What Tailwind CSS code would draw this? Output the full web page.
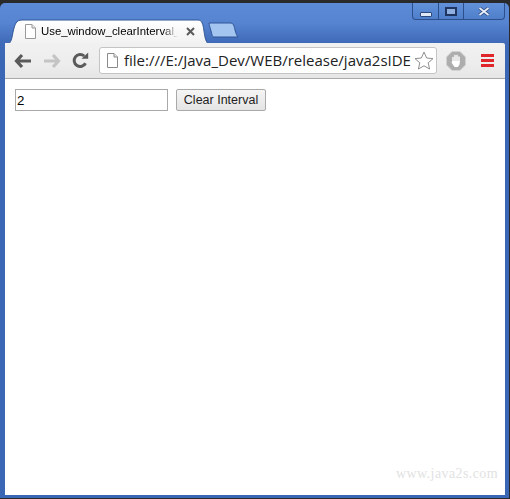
<!DOCTYPE html>
<html lang="en">
<head>
    <meta charset="UTF-8">
    <title>Use_window_clearInterval</title>
    <script src="https://cdn.jsdelivr.net/npm/@tailwindcss/browser@4"></script>
</head>
<body class="bg-white overflow-hidden">
    <!-- window frame -->
    <div class="w-[510px] h-[499px] bg-[#2a2a2a] pt-[3px] pr-[1px] pb-[1px] font-['Liberation_Sans',sans-serif]">
        <div class="relative h-full flex flex-col rounded-t-[5px] bg-[linear-gradient(#5b8ad6_0px,#5784d0_20px,#3e6ab8_40px,#3a67b5_60px,#3a67b5_100%)] pb-[3px] pl-[5px] pr-[4px]">

            <!-- window buttons -->
            <div class="absolute top-0 right-[4px] h-[17px] w-[93px] flex rounded-b-[4px] border border-t-0 border-[#2c4f8c] bg-[linear-gradient(#6291da,#4f7fca)]">
                <div class="w-[26px] flex items-center justify-center border-r border-[#2c4f8c]">
                    <div class="w-[12px] h-[5px] mt-[7px] bg-[#dfe8f5] border border-[#2c4a80] rounded-[1px]"></div>
                </div>
                <div class="w-[25px] flex items-center justify-center border-r border-[#2c4f8c]">
                    <div class="w-[12px] h-[9px] border-[2px] border-[#1f3560] bg-[#8fb0e0]"></div>
                </div>
                <div class="flex-1 flex items-center justify-center">
                    <svg width="12" height="9" viewBox="0 0 12 9"><path d="M1.5 1 L10.5 8 M10.5 1 L1.5 8" stroke="#2c4a80" stroke-width="3.4"/><path d="M1.5 1 L10.5 8 M10.5 1 L1.5 8" stroke="#e8eef8" stroke-width="1.8"/></svg>
                </div>
            </div>

            <!-- tab strip -->
            <div class="relative h-[40px] shrink-0">
                <svg class="absolute left-[2px] top-[16px]" width="204" height="25" viewBox="0 0 204 25">
                    <defs><linearGradient id="tabbg" x1="0" y1="0" x2="0" y2="1"><stop offset="0" stop-color="#ffffff"/><stop offset="1" stop-color="#f1f1f1"/></linearGradient></defs>
                    <path d="M1 25 C4 24 5 19 6 13 C8 5 9 1 15 1 L191 1 C195 1 196 5 197 12 C198 19 199 24 202 25 Z" fill="url(#tabbg)" stroke="#2f5597" stroke-width="1"/>
                </svg>
                <svg class="absolute left-[203px] top-[19px]" width="32" height="16" viewBox="0 0 32 16">
                    <path d="M1 1 L22 1 C26 1 26 4 27 8 C28 12 29 14 30 15 L6 15 C4 15 4 12 3 9 C2 5 1 3 1 1 Z" fill="#a4c5f0" stroke="#2f5597"/>
                </svg>
                <div class="absolute left-[19px] top-[21px] flex items-center h-[15px]">
                    <svg width="13" height="15" viewBox="0 0 13 15"><path d="M1.5 .5 H8 L11.5 4 V14.5 H1.5 Z" fill="#fff" stroke="#9a9a9a"/><path d="M8 .5 V4 H11.5" fill="#e8e8e8" stroke="#9a9a9a"/></svg>
                    <span class="ml-[4px] w-[141px] overflow-hidden whitespace-nowrap text-[11.4px] leading-[15px] text-black [mask-image:linear-gradient(90deg,#000_122px,transparent_137px)]">Use_window_clearInterval_</span>
                    <svg class="ml-[4px]" width="9" height="9" viewBox="0 0 9 9"><path d="M1 1 L8 8 M8 1 L1 8" stroke="#5a5a5a" stroke-width="2"/></svg>
                </div>
            </div>

            <!-- toolbar -->
            <div class="relative h-[36px] shrink-0 flex items-center bg-[linear-gradient(#f1f1f1,#ededed_60%,#e6e6e6)] border-b border-[#a9a9a9] pl-[9px] rounded-tr-[2px]">
                <svg width="18" height="16" viewBox="0 0 18 16"><path d="M8 2 L2.5 8 L8 14 M3 8 H17" fill="none" stroke="#5a5a5a" stroke-width="3.2"/></svg>
                <svg class="ml-[11px]" width="18" height="16" viewBox="0 0 18 16"><path d="M10 2 L15.5 8 L10 14 M15 8 H1" fill="none" stroke="#c4c4c4" stroke-width="3.2"/></svg>
                <svg class="ml-[11px]" width="17" height="17" viewBox="0 0 17 17"><path d="M13.5 11.2 A6 6 0 1 1 12.2 4" fill="none" stroke="#5a5a5a" stroke-width="3"/><path d="M9.5 6.8 L16.2 6.8 L16.2 0.5 Z" fill="#5a5a5a"/></svg>
                <!-- address bar -->
                <div class="ml-[10px] w-[338px] h-[27px] flex items-center bg-white border border-[#c4c4c4] rounded-[3px] pl-[6px]">
                    <svg class="shrink-0" width="13" height="15" viewBox="0 0 13 15"><path d="M1.5 .5 H8 L11.5 4 V14.5 H1.5 Z" fill="#fff" stroke="#8a8a8a"/><path d="M8 .5 V4 H11.5" fill="#e8e8e8" stroke="#8a8a8a"/></svg>
                    <span class="ml-[5px] w-[288px] overflow-hidden whitespace-nowrap text-[15px] text-[#222] font-['Open_Sans',sans-serif]">file:///E:/Java_Dev/WEB/release/java2sIDE</span>
                    <svg class="shrink-0 ml-[2px]" width="20" height="19" viewBox="0 0 20 19"><path d="M10 1 L12.6 7 L19 7.6 L14.2 11.8 L15.6 18 L10 14.8 L4.4 18 L5.8 11.8 L1 7.6 L7.4 7 Z" fill="#fff" stroke="#8f8f8f"/></svg>
                </div>
                <svg class="ml-[9px]" width="20" height="20" viewBox="0 0 20 20">
                    <path d="M6 .5 H14 L19.5 6 V14 L14 19.5 H6 L.5 14 V6 Z" fill="#adadad" stroke="#d2d2d2"/>
                    <path d="M7 10.5 V6.5 M9 10 V4.5 M11 10 V4.5 M13 10.5 V6" stroke="#fff" stroke-width="1.4" stroke-linecap="round"/>
                    <path d="M6.3 10 H13.7 V13 L12 16 H8.5 L5.5 11.5 Z" fill="#fff"/>
                </svg>
                <div class="ml-[15px] w-[13px] flex flex-col gap-[2px]">
                    <div class="h-[3px] bg-[#e0262b]"></div>
                    <div class="h-[3px] bg-[#e0262b]"></div>
                    <div class="h-[3px] bg-[#e0262b]"></div>
                </div>
            </div>

            <!-- page -->
            <div class="relative flex-1 bg-white px-[10px] py-[10px]">
                <div class="flex items-center gap-[8px]">
                    <input type="text" value="2" class="w-[153px] h-[22px] border border-[#a9a9a9] px-[1px] text-[13.3px] text-black font-['Liberation_Sans',sans-serif]">
                    <button class="w-[90px] h-[22px] border border-[#a9a9a9] rounded-[2px] bg-[linear-gradient(#f5f5f5,#e4e4e4)] text-[12.5px] text-[#222] font-['Liberation_Sans',sans-serif]">Clear Interval</button>
                </div>
                <!-- watermark -->
                <span class="absolute right-[7px] bottom-[13px] text-[14px] leading-[16px] tracking-[.4px] text-[#e2e2e2] font-['Liberation_Serif',serif]">www.java2s.com</span>
            </div>
        </div>
    </div>
</body>
</html>
